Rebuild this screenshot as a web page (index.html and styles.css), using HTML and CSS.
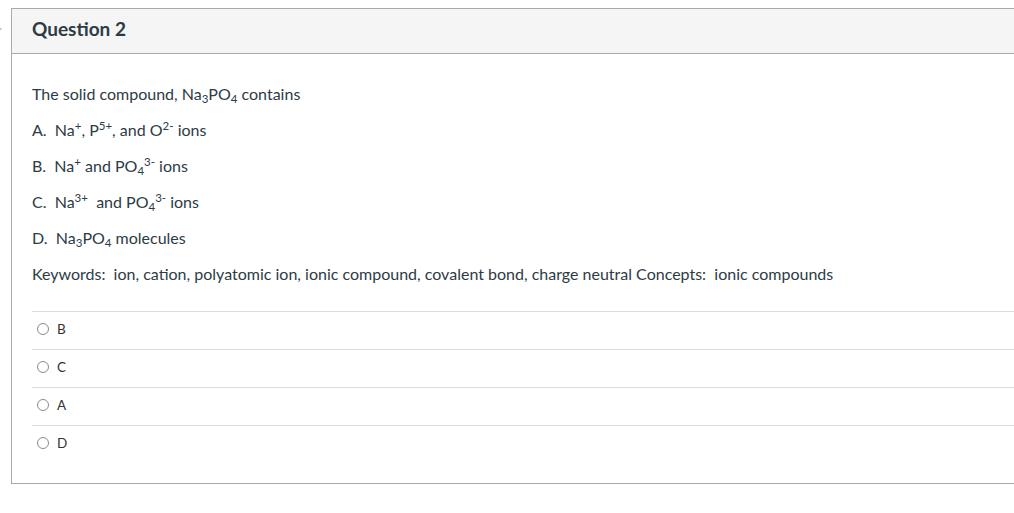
FILE: index.html
```html
<!DOCTYPE html>
<html>
<head>
<meta charset="utf-8">
<link rel="stylesheet" href="styles.css">
</head>
<body>
<span class="edge-arrow"></span>
<div class="card">
  <div class="card-header">
    <h2 class="title">Question 2</h2>
  </div>
  <div class="card-body">
    <p class="line">The solid compound, Na<sub>3</sub>PO<sub>4</sub> contains</p>
    <p class="line">A.&nbsp; Na<sup>+</sup>, P<sup>5+</sup>, and O<sup>2-</sup> ions</p>
    <p class="line">B.&nbsp; Na<sup>+</sup> and PO<sub class="pre">4</sub><sup class="post">3-</sup> ions</p>
    <p class="line">C.&nbsp; Na<sup>3+</sup>&nbsp; and PO<sub class="pre">4</sub><sup class="post">3-</sup> ions</p>
    <p class="line">D.&nbsp; Na<sub>3</sub>PO<sub>4</sub> molecules</p>
    <p class="line">Keywords:&nbsp; ion, cation, polyatomic ion, ionic compound, covalent bond, charge neutral Concepts:&nbsp; ionic compounds</p>
    <div class="answers">
      <label class="answer"><span class="radio"></span><span class="label">B</span></label>
      <label class="answer"><span class="radio"></span><span class="label">C</span></label>
      <label class="answer"><span class="radio"></span><span class="label">A</span></label>
      <label class="answer"><span class="radio"></span><span class="label">D</span></label>
    </div>
  </div>
</div>
</body>
</html>
```
FILE: styles.css
```css
html, body {
  margin: 0;
  padding: 0;
  background: #ffffff;
}
body {
  font-family: Lato, "Open Sans", sans-serif;
  color: #2d3b45;
  padding-top: 8px;
  padding-left: 11px;
  position: relative;
}
.edge-arrow {
  position: absolute;
  left: -3px;
  top: 26px;
  width: 0;
  height: 0;
  border-top: 3px solid transparent;
  border-bottom: 3px solid transparent;
  border-left: 5px solid #b5babd;
}
.card {
  border: 1px solid #a9a9a9;
  border-right: none;
}
.card-header {
  background: #f5f5f5;
  box-sizing: border-box;
  border-bottom: 1px solid #a9a9a9;
  display: flex;
  align-items: center;
  padding-left: 20px;
  padding-bottom: 5px;
  height: 45px;
}
.title {
  margin: 0;
  font-size: 19px;
  font-weight: 700;
  color: #2d3b45;
}
.card-body {
  padding: 30px 0 20px 20px;
}
.line {
  margin: 0 0 16px 0;
  font-size: 16px;
  line-height: 20px;
  white-space: nowrap;
}
.line sub, .line sup {
  font-size: 11.5px;
  line-height: 0;
}
.line sub { vertical-align: -3px; }
.line sup { vertical-align: 6px; }
.answers {
  margin-top: 27px;
}
.answer {
  display: flex;
  align-items: center;
  height: 34px;
  padding-bottom: 3px;
  border-top: 1px solid #dcdcdc;
  padding-left: 5px;
}
.radio {
  width: 12px;
  height: 12px;
  border: 1px solid #8a8a8a;
  border-radius: 50%;
  box-sizing: border-box;
  margin-right: 8px;
}
.label {
  font-size: 13.5px;
  color: #333333;
}
```
